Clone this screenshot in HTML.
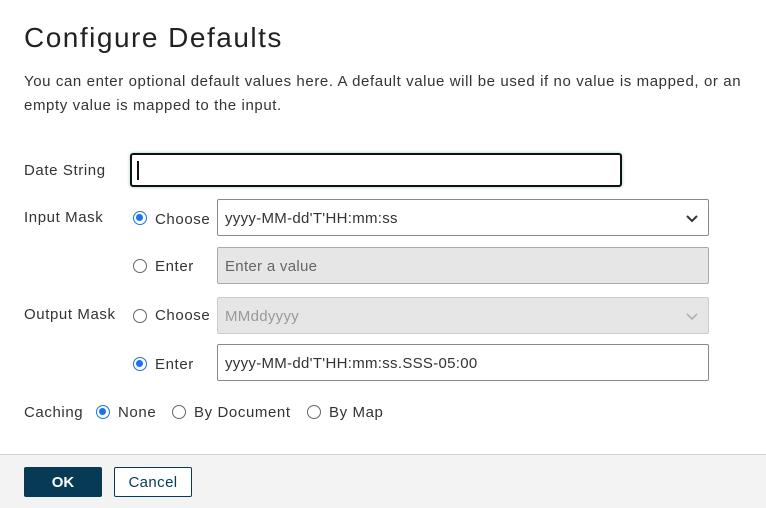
<!DOCTYPE html>
<html><head><meta charset="utf-8"><style>
*{box-sizing:border-box;margin:0;padding:0}
body{width:766px;height:508px;background:#fff;font-family:"Liberation Sans",sans-serif;color:#333;position:relative;overflow:hidden}
.a{position:absolute;white-space:nowrap}
h1{position:absolute;left:24px;top:22px;font-size:28px;font-weight:normal;color:#222;letter-spacing:1.5px}
.p{font-size:15px;line-height:24px;color:#333;letter-spacing:0.6px}
.l{font-size:15px;color:#333;letter-spacing:0.6px}
.in{position:absolute;border:1px solid #8a8a8a;border-radius:2px;height:37px;font-size:15px;padding-left:7px;line-height:37px;color:#333;letter-spacing:0.3px}
.dis{background:#e6e6e6;color:#888;border-color:#aaa}
.r{position:absolute;width:14px;height:14px;border:1px solid #666;border-radius:50%}
.r.on{border:1.5px solid #1a73e8}
.r.on::after{content:"";position:absolute;left:2px;top:2px;width:7px;height:7px;border-radius:50%;background:#1a73e8}
.foot{position:absolute;left:0;top:454px;width:766px;height:54px;background:#f3f3f3;border-top:1px solid #d0d0d0}
</style></head><body>
<h1>Configure Defaults</h1>
<div class="a p" style="left:24px;top:70px">You can enter optional default values here. A default value will be used if no value is mapped, or an<br>empty value is mapped to the input.</div>

<div class="a l" style="left:24px;top:162px">Date String</div>
<div class="in" style="left:130px;top:153px;width:492px;height:34px;border:2px solid #111;border-radius:3px;box-shadow:0 0 3px #9cc"><span style="position:absolute;left:5px;top:6px;width:2px;height:19px;background:#111"></span></div>

<div class="a l" style="left:24px;top:209px">Input Mask</div>
<div class="r on" style="left:133px;top:211px"></div><div class="a l" style="left:155px;top:211px">Choose</div>
<div class="in" style="left:217px;top:199px;width:492px">yyyy-MM-dd'T'HH:mm:ss<svg style="position:absolute;right:10px;top:15px" width="12" height="8"><path d="M1 1l5 5 5-5" stroke="#333" stroke-width="2" fill="none"/></svg></div>
<div class="r" style="left:133px;top:259px"></div><div class="a l" style="left:155px;top:258px">Enter</div>
<div class="in dis" style="left:217px;top:247px;width:492px;color:#666">Enter a value</div>

<div class="a l" style="left:24px;top:306px">Output Mask</div>
<div class="r" style="left:133px;top:309px"></div><div class="a l" style="left:155px;top:307px">Choose</div>
<div class="in dis" style="left:217px;top:297px;width:492px;border-color:#ccc;color:#999">MMddyyyy<svg style="position:absolute;right:10px;top:15px" width="12" height="8"><path d="M1 1l5 5 5-5" stroke="#aaa" stroke-width="1.5" fill="none"/></svg></div>
<div class="r on" style="left:133px;top:357px"></div><div class="a l" style="left:155px;top:356px">Enter</div>
<div class="in" style="left:217px;top:344px;width:492px">yyyy-MM-dd'T'HH:mm:ss.SSS-05:00</div>

<div class="a l" style="left:24px;top:404px">Caching</div>
<div class="r on" style="left:96px;top:405px"></div><div class="a l" style="left:118px;top:404px">None</div>
<div class="r" style="left:172px;top:405px"></div><div class="a l" style="left:194px;top:404px">By Document</div>
<div class="r" style="left:307px;top:405px"></div><div class="a l" style="left:329px;top:404px">By Map</div>

<div class="foot">
<div class="a" style="left:24px;top:12px;width:78px;height:30px;background:#073b55;border-radius:2px;color:#fff;font-weight:bold;font-size:15px;text-align:center;line-height:32px">OK</div>
<div class="a" style="left:114px;top:12px;width:78px;height:30px;background:#fff;border:1px solid #073b55;border-radius:2px;color:#073b55;font-size:15px;text-align:center;line-height:30px;letter-spacing:0.4px">Cancel</div>
</div>
</body></html>
